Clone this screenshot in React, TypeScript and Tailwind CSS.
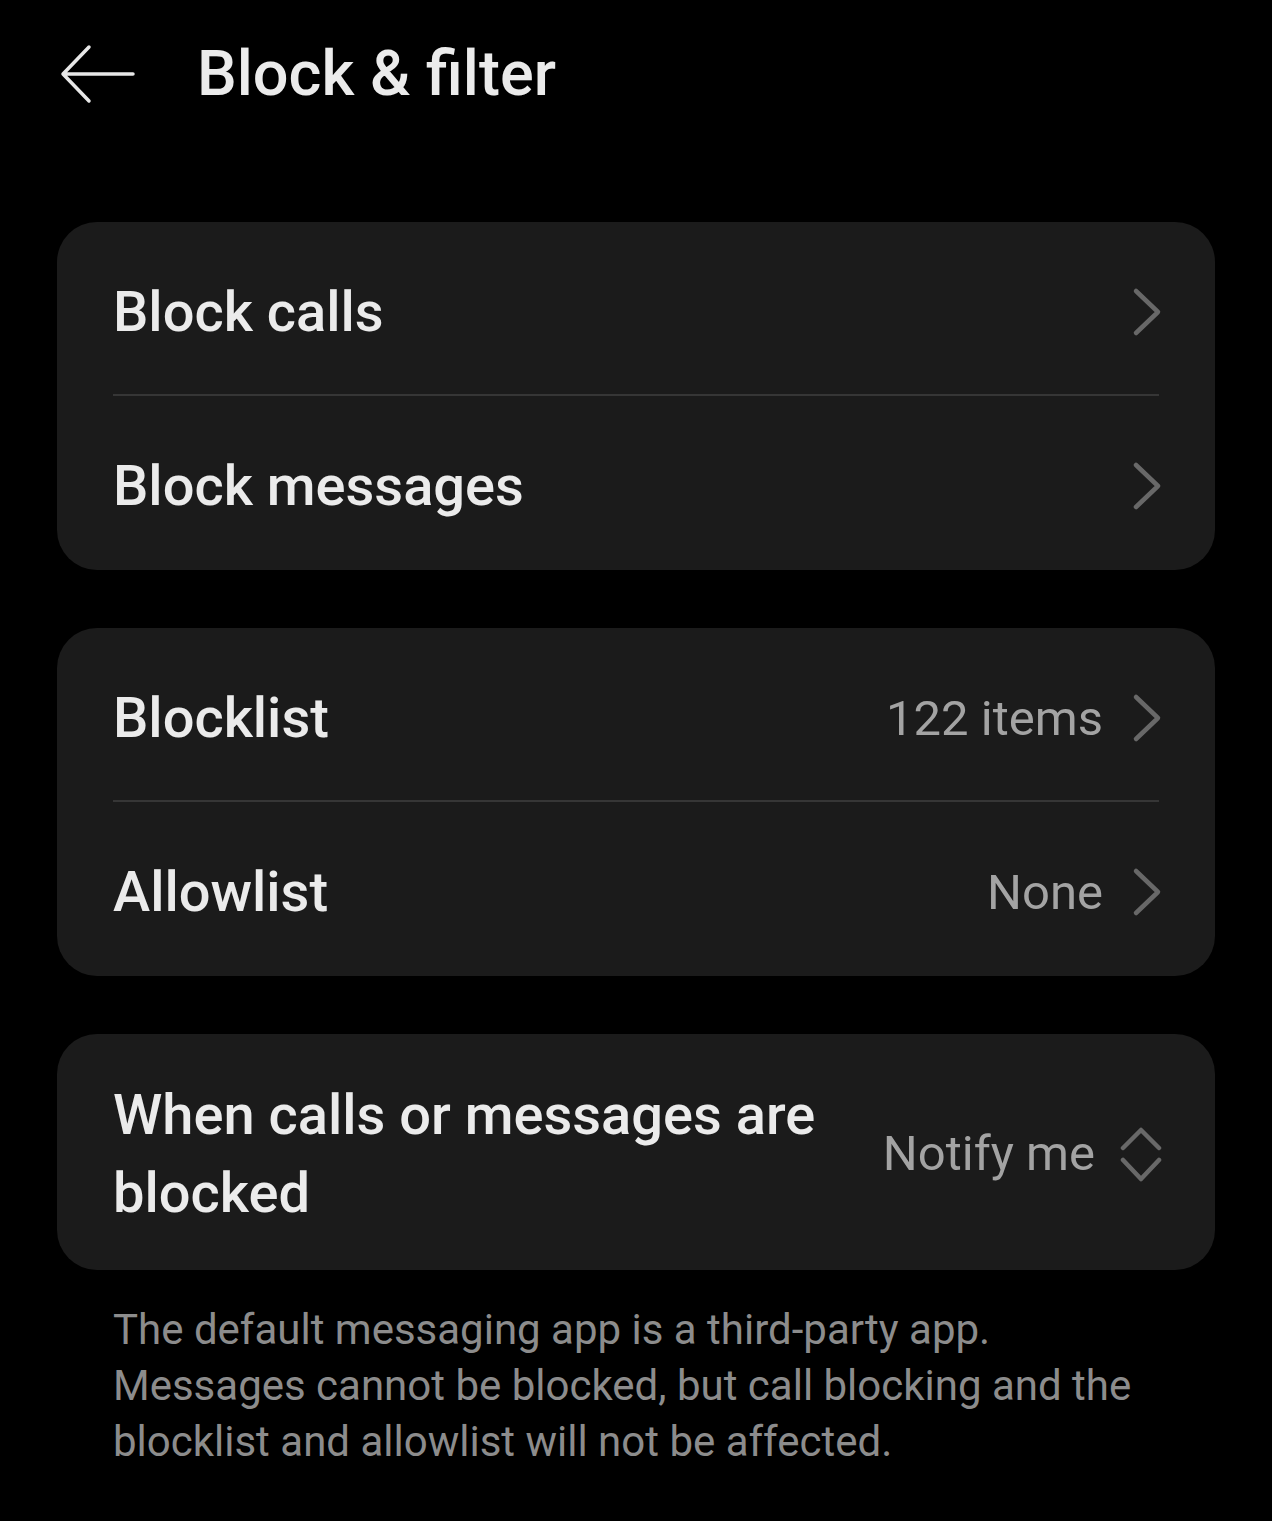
import React from "react";

const font = { fontFamily: "Roboto, 'Noto Sans', sans-serif" };

function Chevron() {
  return (
    <svg width="30" height="50" viewBox="0 0 30 50" className="shrink-0">
      <path d="M4 4 L26 25 L4 46" fill="none" stroke="#686868" strokeWidth="4.5" strokeLinecap="round" strokeLinejoin="round" />
    </svg>
  );
}

function UpDown() {
  return (
    <svg width="42" height="58" viewBox="0 0 42 58" className="shrink-0">
      <path d="M3 22 L21 4 L39 22" fill="none" stroke="#686868" strokeWidth="4.5" strokeLinecap="round" strokeLinejoin="round" />
      <path d="M3 34 L21 53 L39 34" fill="none" stroke="#686868" strokeWidth="4.5" strokeLinecap="round" strokeLinejoin="round" />
    </svg>
  );
}

function Row({ label, value, divider }: { label: string; value?: string; divider?: boolean }) {
  return (
    <div className="relative flex h-[174px] items-center pt-[6px]">
      <div className="flex-1 text-[56px] font-medium leading-[66px] text-[#ebebeb]">{label}</div>
      {value && <div className="mr-[29px] pt-[2px] text-[49px] leading-[60px] text-[#a3a3a3]">{value}</div>}
      <div className="-mr-[3px]">
        <Chevron />
      </div>
      {divider && <div className="absolute bottom-0 left-0 right-0 h-[2px] bg-[#363636]" />}
    </div>
  );
}

export default function App() {
  return (
    <div className="min-h-[1521px] w-full bg-black" style={font}>
      <div className="flex h-[150px] items-center pb-[2px]">
        <svg width="76" height="62" viewBox="0 0 76 62" className="ml-[60px] shrink-0">
          <path d="M3 31 L73 31 M29 4 L3 31 L29 58" fill="none" stroke="#e8e8e8" strokeWidth="3.5" strokeLinecap="round" strokeLinejoin="round" />
        </svg>
        <div className="ml-[61px] text-[63px] font-medium leading-[72px] text-[#ebebeb]">Block &amp; filter</div>
      </div>

      <div className="mx-[57px] mt-[72px] flex flex-col gap-[58px]">
        <div className="rounded-[40px] bg-[#1b1b1b] px-[56px]">
          <Row label="Block calls" divider />
          <Row label="Block messages" />
        </div>

        <div className="rounded-[40px] bg-[#1b1b1b] px-[56px]">
          <Row label="Blocklist" value="122 items" divider />
          <Row label="Allowlist" value="None" />
        </div>

        <div className="flex items-center rounded-[40px] bg-[#1b1b1b] px-[56px] pb-[38px] pt-[42px]">
          <div className="flex-1 text-[56px] font-medium leading-[78px] text-[#ebebeb]">
            When calls or messages are
            <br />
            blocked
          </div>
          <div className="mr-[25px] text-[49px] leading-[60px] text-[#a3a3a3]">Notify me</div>
          <div className="-mr-[3px] mt-[2px]">
            <UpDown />
          </div>
        </div>
      </div>

      <div className="mx-[113px] mt-[32px] text-[42px] leading-[56px] text-[#8c8c8c]">
        The default messaging app is a third-party app.
        <br />
        Messages cannot be blocked, but call blocking and the
        <br />
        blocklist and allowlist will not be affected.
      </div>
    </div>
  );
}
